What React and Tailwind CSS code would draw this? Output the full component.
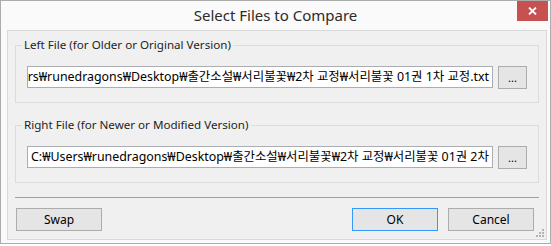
import React from 'react';

const font = "font-['Noto_Sans','Noto_Sans_CJK_KR',sans-serif]";

const leftPath = 'C:₩Users₩runedragons₩Desktop₩출간소설₩서리불꽃₩2차 교정₩서리불꽃 01권 1차 교정.txt';
const rightPath = 'C:₩Users₩runedragons₩Desktop₩출간소설₩서리불꽃₩2차 교정₩서리불꽃 01권 2차 교정.txt';

const FileGroup = ({ label, path, alignEnd, className }) => (
  <fieldset className={`min-w-0 border border-[#dcdcdc] pb-[13px] ${className}`}>
    <legend className="ml-[6px] px-[2px] text-[11.6px] leading-[16px] text-[#1e1e1e]">{label}</legend>
    <div className="mt-[13px] flex items-start gap-[5px] px-[11px]">
      <div
        className={`h-[22px] flex-1 min-w-0 flex items-center overflow-hidden whitespace-nowrap border border-[#abadb3] bg-white px-[3px] text-[12.4px] text-black ${
          alignEnd ? 'justify-end' : 'justify-start'
        }`}
      >
        <span className="shrink-0">{path}</span>
      </div>
      <button className="h-[23px] w-[29px] shrink-0 border border-[#acacac] bg-[#e5e5e5] text-[11px] leading-[14px] text-black">
        ...
      </button>
    </div>
  </fieldset>
);

const DialogButton = ({ children, primary }) => (
  <button
    className={`h-[23px] w-[86px] border bg-[#e5e5e5] text-[12px] text-black ${
      primary ? 'border-[#3399ff]' : 'border-[#acacac]'
    }`}
  >
    {children}
  </button>
);

export default function App() {
  return (
    <div className={`w-[551px] h-[246px] bg-white ${font}`}>
      <div className="relative flex h-[244px] w-[551px] flex-col border border-[#acacac] bg-[#fafafa]">
        {/* Title bar */}
        <div className="flex h-[29px] items-center justify-center text-[15px] text-[#2b2b2b]">
          Select Files to Compare
        </div>
        <button className="absolute right-[2px] top-0 flex h-[20px] w-[31px] items-center justify-center bg-[#c75050]">
          <svg width="9" height="8" viewBox="0 0 9 8">
            <path d="M1 0.5 L8 7.5 M8 0.5 L1 7.5" stroke="white" strokeWidth="1.8" />
          </svg>
        </button>

        {/* Client area */}
        <div className="relative mb-[3px] ml-[6px] mr-[3px] flex flex-1 flex-col border border-[#d9d9d9] bg-[#f0f0f0] px-[7px] pt-[6px]">
          <FileGroup label="Left File (for Older or Original Version)" path={leftPath} alignEnd />
          <FileGroup
            label="Right File (for Newer or Modified Version)"
            path={rightPath}
            className="mt-[14px]"
          />

          <div className="mt-[14px] h-[2px] border-t border-[#a0a0a0] border-b-white" />

          <div className="mt-[9px] flex items-center pl-[1px] pr-[5px]">
            <DialogButton>Swap</DialogButton>
            <div className="flex-1" />
            <DialogButton primary>OK</DialogButton>
            <div className="w-[10px]" />
            <DialogButton>Cancel</DialogButton>
          </div>

          {/* size grip */}
          <svg className="absolute bottom-[1px] right-[1px]" width="9" height="9" viewBox="0 0 9 9">
            <g fill="#b4b4b4">
              <rect x="6" y="0" width="2" height="2" />
              <rect x="3" y="3" width="2" height="2" />
              <rect x="6" y="3" width="2" height="2" />
              <rect x="0" y="6" width="2" height="2" />
              <rect x="3" y="6" width="2" height="2" />
              <rect x="6" y="6" width="2" height="2" />
            </g>
          </svg>
        </div>
      </div>
    </div>
  );
}
